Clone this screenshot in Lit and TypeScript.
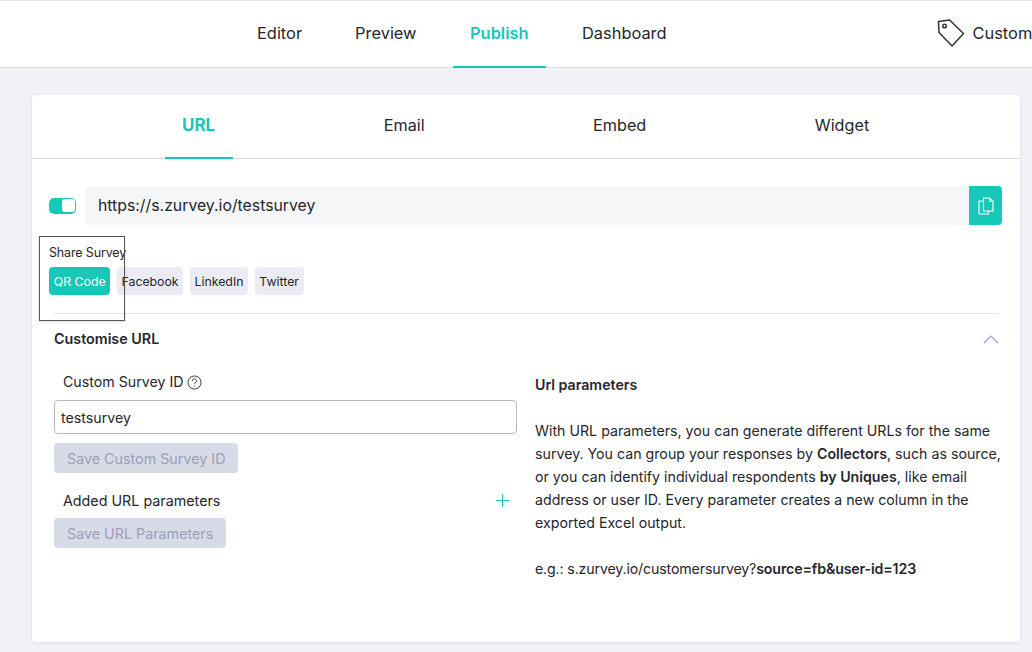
import { LitElement, html, css } from 'lit';
import { customElement } from 'lit/decorators.js';

@customElement('app-root')
export class AppRoot extends LitElement {
  static styles = css`
    :host {
      display: block;
      position: relative;
      width: 1032px;
      height: 652px;
      overflow: hidden;
      background: #f0f2f8;
      font-family: Inter, 'Liberation Sans', sans-serif;
      color: #26262c;
    }
    .topbar {
      display: flex;
      height: 66px;
      padding-left: 240px;
      gap: 19px;
      background: #fff;
      border-top: 1px solid #e6e6ea;
      border-bottom: 1px solid #dcdfeb;
      white-space: nowrap;
    }
    .nav {
      display: flex;
      align-items: center;
      padding: 0 17px 2px;
      font-size: 16.4px;
      border-bottom: 2px solid transparent;
      margin-bottom: -1px;
    }
    .nav.on {
      color: #17c7b7;
      font-weight: 600;
      padding: 0 17.5px 2px;
      border-bottom-color: #17c7b7;
    }
    .custom {
      display: flex;
      align-items: center;
      gap: 8px;
      margin-left: 234px;
      padding-bottom: 2px;
      font-size: 16.4px;
    }
    .custom svg { width: 28px; height: 30px; }
    .card {
      margin: 27px 12px 0 32px;
      height: 547px;
      background: #fff;
      border-radius: 4px;
      box-shadow: 0 1px 4px rgba(60, 70, 110, 0.12);
    }
    .tabs {
      display: flex;
      height: 63px;
      padding-left: 133px;
      gap: 134.5px;
      border-bottom: 1px solid #d9dbeb;
    }
    .tab {
      display: flex;
      align-items: center;
      padding: 0 17px 2px;
      font-size: 16.2px;
      border-bottom: 2px solid transparent;
      margin-bottom: -1px;
    }
    .tab.on {
      color: #17c7b7;
      font-size: 17px;
      font-weight: 700;
      padding-right: 18px;
      margin-right: -1px;
      border-bottom-color: #17c7b7;
    }
    .urlrow {
      display: flex;
      align-items: center;
      gap: 9px;
      margin: 27px 18px 0 17px;
    }
    .toggle {
      display: flex;
      justify-content: flex-end;
      align-items: center;
      width: 27px;
      height: 16px;
      padding-right: 1.5px;
      box-sizing: border-box;
      border-radius: 5px;
      background: #17c7b7;
    }
    .toggle i {
      display: block;
      width: 13px;
      height: 13px;
      border-radius: 3px;
      background: #fff;
    }
    .field { flex: 1; display: flex; }
    .url {
      flex: 1;
      display: flex;
      align-items: center;
      height: 39px;
      padding: 0 0 1px 13px;
      box-sizing: border-box;
      font-size: 15.8px;
      background: #f5f6f8;
      border-radius: 4px 0 0 4px;
    }
    .copy {
      display: flex;
      align-items: center;
      justify-content: center;
      width: 33px;
      height: 39px;
      background: #17c7b7;
      border-radius: 0 4px 4px 0;
    }
    .share-label {
      margin: 20px 0 0 17px;
      font-size: 12.5px;
      letter-spacing: -0.15px;
      line-height: 16px;
    }
    .share {
      display: flex;
      gap: 6.3px;
      margin: 6px 0 0 17px;
    }
    .chip {
      display: flex;
      align-items: center;
      height: 28px;
      padding: 0 4.8px;
      font-size: 12.3px;
      background: #ebecf3;
      border-radius: 4px;
    }
    .chip.on { background: #17c7b7; color: #fff; }
    .note {
      position: absolute;
      left: 39px;
      top: 236px;
      width: 84px;
      height: 83px;
      border: 1.5px solid #555;
      box-shadow: 0 1px 2px rgba(0, 0, 0, 0.15);
    }
    .divider {
      height: 1px;
      margin: 18px 22px 0 22px;
      background: #e4e6f0;
    }
    .head {
      display: flex;
      justify-content: space-between;
      align-items: center;
      margin: 15px 21px 0 22px;
      font-size: 14.3px;
      font-weight: 600;
      line-height: 20px;
    }
    .cols {
      display: flex;
      gap: 18px;
      margin: 23px 0 0 22px;
    }
    .left { width: 463px; }
    .label {
      display: flex;
      align-items: center;
      gap: 4px;
      padding-left: 9px;
      font-size: 14.2px;
      line-height: 20px;
    }
    .input {
      display: flex;
      align-items: center;
      height: 32px;
      margin-top: 8px;
      padding-left: 6px;
      font-size: 14.2px;
      border: 1.5px solid #b8b8bc;
      border-radius: 4px;
    }
    .btn {
      display: inline-flex;
      align-items: center;
      height: 30px;
      margin-top: 9px;
      padding: 0 13px;
      font-size: 14.3px;
      color: #9aa0b8;
      background: #d7dbe8;
      border-radius: 4px;
    }
    .added {
      display: flex;
      justify-content: space-between;
      align-items: center;
      margin-top: 17.5px;
      padding: 0 8px 0 9px;
      font-size: 14.3px;
      line-height: 20px;
    }
    .added + .btn { margin-top: 7.5px; }
    .right {
      width: 470px;
      padding-top: 1px;
      font-size: 14.2px;
      line-height: 23px;
    }
    .right p { margin: 0 0 23px; }
    .right .eg { letter-spacing: -0.15px; }
    b { font-weight: 600; }
  `;

  render() {
    return html`
      <div class="topbar">
        <div class="nav">Editor</div>
        <div class="nav">Preview</div>
        <div class="nav on">Publish</div>
        <div class="nav">Dashboard</div>
        <div class="custom">
          <svg viewBox="0 0 28 30" fill="none" stroke="#333" stroke-width="1.5" stroke-linejoin="round">
            <path d="M1.5 3.5 L12.5 2 L26.5 15.5 L15 28 L2 14.5 Z" />
            <circle cx="7.5" cy="8" r="1.8" />
          </svg>
          Custom
        </div>
      </div>
      <div class="card">
        <div class="tabs">
          <div class="tab on">URL</div>
          <div class="tab">Email</div>
          <div class="tab">Embed</div>
          <div class="tab">Widget</div>
        </div>
        <div class="urlrow">
          <div class="toggle"><i></i></div>
          <div class="field">
            <div class="url">https://s.zurvey.io/testsurvey</div>
            <div class="copy">
              <svg width="16" height="18" viewBox="0 0 16 18" fill="none" stroke="#fff" stroke-width="1.1">
                <path d="M5.5 1h6l3.5 3.5V14H5.5z" />
                <path d="M11.5 1v3.5H15" />
                <path d="M5.5 4H1v13h9.5v-3" />
              </svg>
            </div>
          </div>
        </div>
        <div class="share-label">Share Survey</div>
        <div class="share">
          <div class="chip on">QR Code</div>
          <div class="chip">Facebook</div>
          <div class="chip">LinkedIn</div>
          <div class="chip">Twitter</div>
        </div>
        <div class="divider"></div>
        <div class="head">
          Customise URL
          <svg width="16" height="9" viewBox="0 0 16 9" fill="none" stroke="#9aa0c0" stroke-width="1.2">
            <path d="M1 8l7-7 7 7" />
          </svg>
        </div>
        <div class="cols">
          <div class="left">
            <div class="label">
              Custom Survey ID
              <svg width="15" height="15" viewBox="0 0 16 16" fill="none" stroke="#333" stroke-width="1">
                <circle cx="8" cy="8" r="7" />
                <path d="M5.8 6.3a2.2 2.2 0 1 1 3.4 1.8c-.8.5-1.2.9-1.2 1.7" />
                <path d="M8 11.3v1" />
              </svg>
            </div>
            <div class="input">testsurvey</div>
            <div class="btn">Save Custom Survey ID</div>
            <div class="added">
              Added URL parameters
              <svg width="13" height="13" viewBox="0 0 13 13" stroke="#17c7b7" stroke-width="1.2">
                <path d="M6.5 0v13M0 6.5h13" />
              </svg>
            </div>
            <div class="btn">Save URL Parameters</div>
          </div>
          <div class="right">
            <p><b>Url parameters</b></p>
            <p>
              With URL parameters, you can generate different URLs for the same<br />
              survey. You can group your responses by <b>Collectors</b>, such as source,<br />
              or you can identify individual respondents <b>by Uniques</b>, like email<br />
              address or user ID. Every parameter creates a new column in the<br />
              exported Excel output.
            </p>
            <p class="eg">e.g.: s.zurvey.io/customersurvey?<b>source=fb&amp;user-id=123</b></p>
          </div>
        </div>
      </div>
      <div class="note"></div>
    `;
  }
}
